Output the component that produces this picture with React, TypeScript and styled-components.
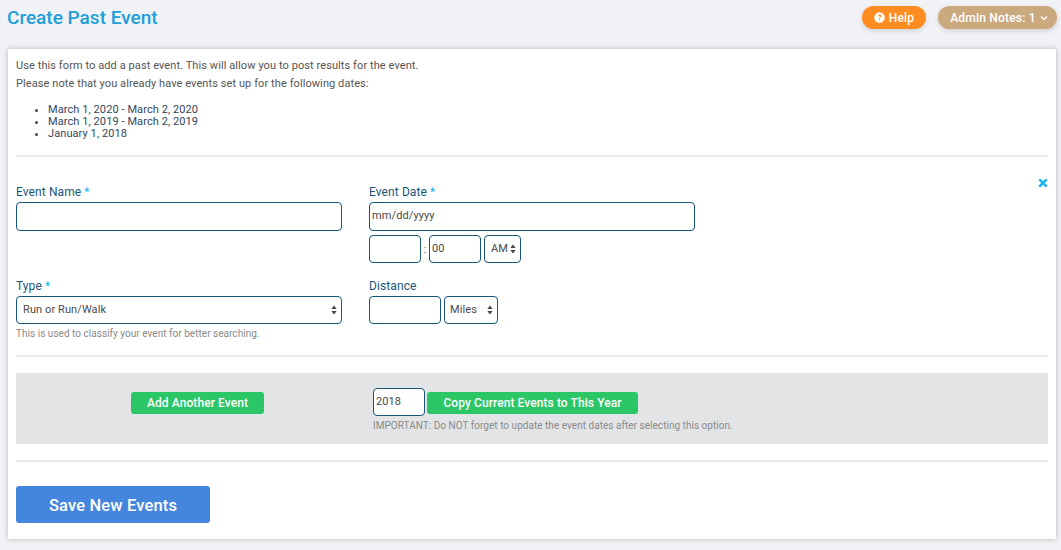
import React from "react";
import styled, {createGlobalStyle} from "styled-components";

const GlobalStyle = createGlobalStyle`
  html, body {
    margin: 0;
    padding: 0;
    background: #f0f2f5;
    font-family: Roboto, "Liberation Sans", sans-serif;
    -webkit-font-smoothing: antialiased;
  }
`;

const Page = styled.div`
  width: 1061px;
  height: 550px;
  overflow: hidden;
  box-sizing: border-box;
  padding: 6px 4px 0 8px;
`;

const Header = styled.header`
  display: flex;
  align-items: flex-start;
  height: 43px;
`;

const Title = styled.h1`
  margin: 0 auto 0 -1px;
  font-size: 19px;
  line-height: 24px;
  font-weight: 500;
  color: #1e9fd9;
`;

const Pill = styled.button<{$bg: string; $width: number; $pad?: number}>`
  display: flex;
  align-items: center;
  justify-content: center;
  gap: 4px;
  box-sizing: border-box;
  width: ${p => p.$width}px;
  height: 23px;
  margin-left: 12px;
  padding: 0 0 0 ${p => p.$pad ?? 0}px;
  border: none;
  border-radius: 12px;
  background: ${p => p.$bg};
  box-shadow: 0 2px 5px rgba(0, 0, 0, 0.13);
  color: #fff;
  font: 500 12px Roboto, sans-serif;
  letter-spacing: 0.2px;
`;

const Card = styled.main`
  box-sizing: border-box;
  width: 1048px;
  height: 490px;
  padding: 10px 8px 0;
  background: #fff;
  box-shadow: 0 0 5px rgba(0, 0, 0, 0.25);
`;

const Intro = styled.p`
  margin: 0 0 5px;
  font-size: 11px;
  line-height: 13px;
  letter-spacing: 0.085px;
  color: #555;
`;

const DateList = styled.ul`
  margin: 14px 0 0;
  padding: 0 0 0 32px;
  font-size: 11px;
  line-height: 12px;
  letter-spacing: 0.085px;
  color: #33475b;
`;

const Divider = styled.hr<{$top: number; $bottom: number}>`
  height: 2px;
  margin: ${p => p.$top}px 0 ${p => p.$bottom}px;
  border: none;
  background: #ebebed;
`;

const FormBlock = styled.div`
  position: relative;
`;

const FormGrid = styled.div`
  display: grid;
  grid-template-columns: 326px 326px;
  column-gap: 27px;
  row-gap: 16px;
`;

const Close = styled.button`
  position: absolute;
  top: -7px;
  right: 0;
  display: flex;
  padding: 0;
  border: none;
  background: none;
  color: #12b5f0;
`;

const Field = styled.div`
  display: flex;
  flex-direction: column;
`;

const Label = styled.label`
  margin-bottom: 3px;
  font-size: 12px;
  line-height: 14px;
  letter-spacing: 0.1px;
  color: #17577a;
`;

const Star = styled.span`
  color: #12b5f0;
`;

const Input = styled.input<{$width?: number; $height?: number}>`
  box-sizing: border-box;
  width: ${p => (p.$width ? `${p.$width}px` : "100%")};
  height: ${p => p.$height ?? 28}px;
  padding: 0 2px 2px;
  border: 1px solid #17577a;
  border-radius: 4px;
  background: #fff;
  font: 11px Roboto, sans-serif;
  letter-spacing: 0.1px;
  color: #4a4a4a;
  outline: none;

  &::placeholder {
    color: #4a4a4a;
    opacity: 1;
  }
`;

const SelectWrap = styled.div<{$width?: number; $left?: number}>`
  position: relative;
  width: ${p => (p.$width ? `${p.$width}px` : "100%")};
  height: 28px;
  margin-left: ${p => p.$left ?? 0}px;
`;

const Select = styled.select<{$pad: number}>`
  appearance: none;
  box-sizing: border-box;
  width: 100%;
  height: 100%;
  padding: 0 0 2px ${p => p.$pad}px;
  border: 1px solid #17577a;
  border-radius: 4px;
  background: #fff;
  font: 11px Roboto, sans-serif;
  letter-spacing: 0.1px;
  color: #4a4a4a;
  outline: none;
`;

const Carets = styled.svg`
  position: absolute;
  top: 50%;
  right: 5px;
  margin-top: -5px;
  pointer-events: none;
`;

const TimeRow = styled.div`
  display: flex;
  align-items: center;
  margin-top: 4px;
`;

const Colon = styled.span`
  width: 8px;
  text-align: center;
  font-size: 11px;
  color: #555;
`;

const InlineRow = styled.div`
  display: flex;
  gap: 3px;
`;

const Hint = styled.small`
  display: block;
  margin-top: 4px;
  font-size: 10px;
  line-height: 12px;
  letter-spacing: 0.03px;
  color: #8a8a8a;
`;

const Panel = styled.section`
  display: grid;
  grid-template-columns: 330px 1fr;
  column-gap: 27px;
  height: 71px;
  box-sizing: border-box;
  padding: 15px 0 0;
  background: #e3e4e6;
`;

const PanelLeft = styled.div`
  display: flex;
  justify-content: center;
  padding: 4px 0 0 33px;
`;

const GreenButton = styled.button<{$width: number}>`
  box-sizing: border-box;
  width: ${p => p.$width}px;
  height: 22px;
  padding: 0;
  border: none;
  border-radius: 3px;
  background: #2bc666;
  color: #fff;
  font: 500 12px Roboto, sans-serif;
  letter-spacing: 0.08px;
`;

const CopyRow = styled.div`
  display: flex;
  align-items: flex-start;
  gap: 2px;

  ${GreenButton} {
    margin-top: 4px;
  }
`;

const SaveButton = styled.button`
  display: block;
  width: 194px;
  height: 37px;
  padding: 2px 0 0;
  border: none;
  border-radius: 3px;
  background: #4485de;
  color: #fff;
  font: 500 16.5px Roboto, sans-serif;
  letter-spacing: 0.15px;
`;

const SelectCarets = () => (
  <Carets width="6" height="10" viewBox="0 0 6 10">
    <path d="M3 0.5 5.7 4H0.3Z M3 9.5 0.3 6H5.7Z" fill="#4a4a4a" />
  </Carets>
);

const App: React.FC = () => {
  return (
    <Page>
      <GlobalStyle />
      <Header>
        <Title>Create Past Event</Title>
        <Pill $bg="#ff8c21" $width={64}>
          <svg width="11" height="11" viewBox="0 0 11 11">
            <circle cx="5.5" cy="5.5" r="5.2" fill="#fff" />
            <path d="M3.7 4.2C3.8 3.1 4.6 2.6 5.6 2.6 6.7 2.6 7.4 3.3 7.4 4.1 7.4 5.3 5.9 5.4 5.9 6.5H5C5 4.9 6.3 4.9 6.3 4.1 6.3 3.7 6 3.5 5.5 3.5 5.1 3.5 4.8 3.8 4.7 4.3Z M4.9 7.1H6V8.3H4.9Z" fill="#ff8c21" />
          </svg>
          Help
        </Pill>
        <Pill $bg="#caa97f" $width={119} $pad={3}>
          Admin Notes: 1
          <svg width="8" height="6" viewBox="0 0 8 6">
            <path d="M1 1.5 4 4.5 7 1.5" fill="none" stroke="#fff" strokeWidth="1.3" />
          </svg>
        </Pill>
      </Header>
      <Card>
        <Intro>Use this form to add a past event. This will allow you to post results for the event.</Intro>
        <Intro>Please note that you already have events set up for the following dates:</Intro>
        <DateList>
          <li>March 1, 2020 - March 2, 2020</li>
          <li>March 1, 2019 - March 2, 2019</li>
          <li>January 1, 2018</li>
        </DateList>
        <Divider $top={15} $bottom={28} />
        <FormBlock>
          <FormGrid>
            <Field>
              <Label>Event Name <Star>*</Star></Label>
              <Input $height={29} />
            </Field>
            <Field>
              <Label>Event Date <Star>*</Star></Label>
              <Input $height={29} placeholder="mm/dd/yyyy" />
              <TimeRow>
                <Input $width={52} />
                <Colon>:</Colon>
                <Input $width={52} defaultValue="00" />
                <SelectWrap $width={37} $left={3}>
                  <Select $pad={6} defaultValue="AM">
                    <option>AM</option>
                    <option>PM</option>
                  </Select>
                  <SelectCarets />
                </SelectWrap>
              </TimeRow>
            </Field>
            <Field>
              <Label>Type <Star>*</Star></Label>
              <SelectWrap>
                <Select $pad={6} defaultValue="Run or Run/Walk">
                  <option>Run or Run/Walk</option>
                </Select>
                <SelectCarets />
              </SelectWrap>
              <Hint>This is used to classify your event for better searching.</Hint>
            </Field>
            <Field>
              <Label>Distance</Label>
              <InlineRow>
                <Input $width={72} />
                <SelectWrap $width={54}>
                  <Select $pad={5} defaultValue="Miles">
                    <option>Miles</option>
                    <option>Kilometers</option>
                  </Select>
                  <SelectCarets />
                </SelectWrap>
              </InlineRow>
            </Field>
          </FormGrid>
          <Close aria-label="Remove event">
            <svg width="10" height="10" viewBox="0 0 10 10">
              <path d="M1.3 1.3 8.7 8.7M8.7 1.3 1.3 8.7" stroke="currentColor" strokeWidth="2.4" />
            </svg>
          </Close>
        </FormBlock>
        <Divider $top={15} $bottom={16} />
        <Panel>
          <PanelLeft>
            <GreenButton $width={133}>Add Another Event</GreenButton>
          </PanelLeft>
          <div>
            <CopyRow>
              <Input $width={52} defaultValue="2018" />
              <GreenButton $width={211}>Copy Current Events to This Year</GreenButton>
            </CopyRow>
            <Hint>IMPORTANT: Do NOT forget to update the event dates after selecting this option.</Hint>
          </div>
        </Panel>
        <Divider $top={16} $bottom={24} />
        <SaveButton>Save New Events</SaveButton>
      </Card>
    </Page>
  );
};

export default App;
